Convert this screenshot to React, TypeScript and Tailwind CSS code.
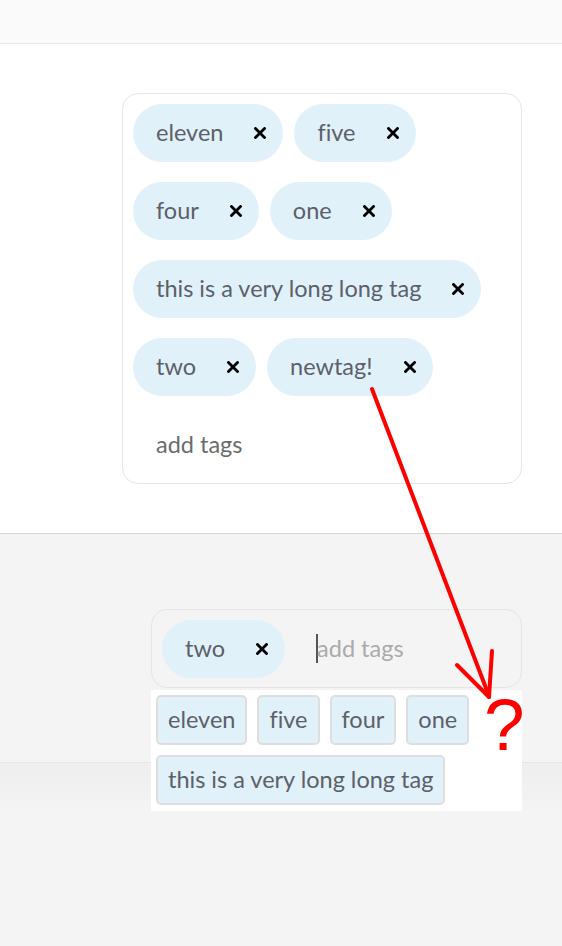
import React from 'react';

const tags = ['eleven', 'five', 'four', 'one', 'this is a very long long tag', 'two', 'newtag!'];
const suggestions = ['eleven', 'five', 'four', 'one', 'this is a very long long tag'];

function Cross() {
  return (
    <svg width="12" height="12" viewBox="0 0 12 12" className="shrink-0">
      <path d="M1.5 1.5 L10.5 10.5 M10.5 1.5 L1.5 10.5" stroke="#000" strokeWidth="2.8" strokeLinecap="square" />
    </svg>
  );
}

function Tag({ label }: { label: string }) {
  return (
    <div className="h-[58px] flex items-center rounded-full bg-[#e1f1f9] pl-[23px] pr-[17px]">
      <span className="text-[23.5px] text-[#5b6069] leading-none">{label}</span>
      <button className="ml-[31px] flex items-center">
        <Cross />
      </button>
    </div>
  );
}

export default function App() {
  return (
    <div
      className="relative min-h-screen overflow-hidden bg-[#f4f4f4] [font-variant-ligatures:none]"
      style={{ fontFamily: 'Lato, "Open Sans", sans-serif' }}
    >
      {/* top bar */}
      <div className="h-[44px] bg-[#fafafa] border-b border-[#e5e5e5]" />

      {/* expanded tag input */}
      <div className="h-[490px] bg-white border-b border-[#d4d4d4] flex justify-end pr-[40px] pt-[49px]">
        <div className="w-[400px] h-[391px] rounded-[16px] border border-[#e5e5e5] p-[10px] flex flex-wrap content-start gap-x-[11px] gap-y-[20px]">
          {tags.map((t) => (
            <Tag key={t} label={t} />
          ))}
          <div className="h-[58px] flex items-center pl-[23px] w-full">
            <input
              className="w-[200px] outline-none bg-transparent text-[23.5px] placeholder:text-[#6b6b6b]"
              placeholder="add tags"
            />
          </div>
        </div>
      </div>

      {/* collapsed tag input with suggestions */}
      <div className="h-[229px] border-b border-[#e5e5e5] flex justify-end pr-[40px] pt-[75px]">
        <div className="relative w-[371px]">
          <div className="h-[79px] rounded-[16px] border border-[#e5e5e5] p-[10px] flex items-center gap-[31px]">
            <Tag label="two" />
            <div className="flex flex-1 min-w-0 items-center">
              <span className="w-[2px] h-[29px] bg-[#555] -mr-[1px] shrink-0" />
              <input
                className="w-full min-w-0 outline-none bg-transparent text-[23.5px] placeholder:text-[#aaaaaa]"
                placeholder="add tags"
              />
            </div>
          </div>
          <div className="absolute left-0 right-0 top-[81px] bg-white p-[5px] pb-[6px] flex flex-wrap gap-x-[10px] gap-y-[10px] z-10">
            {suggestions.map((s) => (
              <div
                key={s}
                className="h-[50px] flex items-center px-[10px] rounded-[5px] border-2 border-[#dedede] bg-[#e1f1f9] text-[23.5px] text-[#5b6069]"
              >
                {s}
              </div>
            ))}
          </div>
        </div>
      </div>

      <div className="h-[48px] bg-gradient-to-b from-[#eeeeee] to-[#f4f4f4]" />

      {/* annotation */}
      <svg className="absolute left-0 top-0 w-[562px] h-[946px] pointer-events-none z-20" viewBox="0 0 562 946">
        <g stroke="#ff0000" strokeWidth="4" strokeLinecap="round" fill="none">
          <path d="M372 389 L489 696" />
          <path d="M457 665 L489 697" />
          <path d="M492 651 L489 697" />
        </g>
      </svg>
      <span
        className="absolute left-[484px] top-[688px] text-[73px] leading-none text-[#ff0000] z-20"
        style={{ fontFamily: '"Liberation Sans", Arial, sans-serif' }}
      >
        ?
      </span>
    </div>
  );
}
